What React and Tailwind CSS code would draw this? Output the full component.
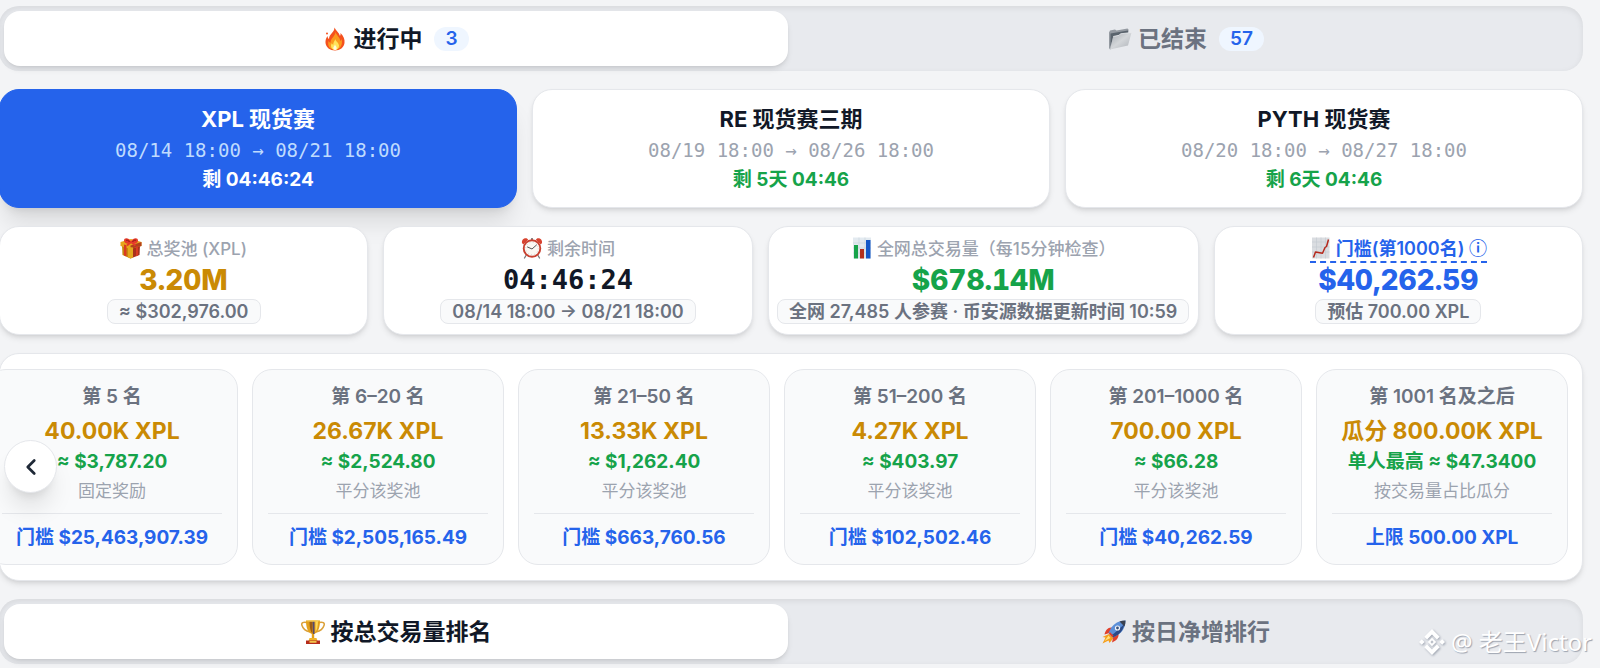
import React from 'react';
import { ChevronLeft } from 'lucide-react';

const contests = [
  { name: 'XPL 现货赛', range: '08/14 18:00 → 08/21 18:00', left: '剩 04:46:24', active: true },
  { name: 'RE 现货赛三期', range: '08/19 18:00 → 08/26 18:00', left: '剩 5天 04:46' },
  { name: 'PYTH 现货赛', range: '08/20 18:00 → 08/27 18:00', left: '剩 6天 04:46' },
];

const tiers = [
  { rank: '第 5 名', prize: '40.00K XPL', usd: '≈ $3,787.20', note: '固定奖励', limit: '门槛 $25,463,907.39' },
  { rank: '第 6–20 名', prize: '26.67K XPL', usd: '≈ $2,524.80', note: '平分该奖池', limit: '门槛 $2,505,165.49' },
  { rank: '第 21–50 名', prize: '13.33K XPL', usd: '≈ $1,262.40', note: '平分该奖池', limit: '门槛 $663,760.56' },
  { rank: '第 51–200 名', prize: '4.27K XPL', usd: '≈ $403.97', note: '平分该奖池', limit: '门槛 $102,502.46' },
  { rank: '第 201–1000 名', prize: '700.00 XPL', usd: '≈ $66.28', note: '平分该奖池', limit: '门槛 $40,262.59' },
  { rank: '第 1001 名及之后', prize: '瓜分 800.00K XPL', usd: '单人最高 ≈ $47.3400', note: '按交易量占比瓜分', limit: '上限 500.00 XPL' },
];

const FireIcon = () => (
  <svg viewBox="0 0 24 24" className="w-6 h-6 shrink-0" aria-hidden="true">
    <path d="M11.5 0.5c1 3 4.500 5 5.500 8.500c.6-.9.7-1.900.5-3c3 3 4.500 6.200 4 10c-.5 4.500-4.500 7.500-9.500 7.500S3 20.500 2.500 16c-.3-3 .8-5.200 2-7c.2 1.500.6 2.500 1.500 3C6 7 11.500 5.500 11.500.5z" fill="#f4511e" />
    <path d="M12.500 5c.5 3 4.500 5 4.800 9c.8-.6 1.100-1.300 1.200-2.200c1.500 5-.5 10.700-6.500 10.700S4.500 18.500 5.500 14c.6 1 1.200 1.500 2 1.800C7.500 11 12 10 12.500 5z" fill="#fb9a1e" />
    <path d="M12.300 12c0 2 3.700 3.500 3.700 6.800c0 2.500-1.700 4.200-4 4.200s-4-1.700-4-4.200c0-1 .3-1.800.8-2.500c.4.8.8 1.200 1.500 1.400c-.3-2.200 1.500-3.500 2-5.700z" fill="#ffe45c" />
    <path d="M12 17.500c.3 1.500 1.700 2 1.700 3.500s-.8 2-1.700 2s-1.700-.8-1.700-2s1.300-1.800 1.700-3.500z" fill="#fffbe0" />
    <circle cx="4" cy="6.500" r="1" fill="#f4511e" />
  </svg>
);

const FolderIcon = () => (
  <svg viewBox="0 0 24 24" className="w-6 h-6 shrink-0" aria-hidden="true">
    <defs>
      <linearGradient id="folderFront" x1="0" y1="0" x2="1" y2="1">
        <stop offset="0" stopColor="#a6abb1" />
        <stop offset="0.5" stopColor="#d3d6d9" />
        <stop offset="1" stopColor="#aeb2b8" />
      </linearGradient>
    </defs>
    <path d="M1 5.500l1-2l5-1l1.500 1L19.500 1.500l1 1V14L2 22.500L1 21z" fill="#949aa1" />
    <path d="M2.500 6.500L20 3.500v4l-15 3l-2.500 9z" fill="#59636c" />
    <path d="M5.200 9.500L11 8.300l1.500-1.500L23.500 5.500L20 18.500L2 22.500z" fill="url(#folderFront)" />
    <path d="M5.200 9.500L11 8.300l1.500-1.500L23.500 5.500" fill="none" stroke="#eceef0" strokeWidth="0.8" />
  </svg>
);

const GiftIcon = () => (
  <svg viewBox="0 0 22 22" className="w-[22px] h-[22px] shrink-0" aria-hidden="true">
    <path d="M2 8.500l8.500 3V21.500L2.500 18z" fill="#c8860d" />
    <path d="M10.500 11.500L20 8.500L19.500 18l-9 3.500z" fill="#a9301c" />
    <path d="M0.500 5L11 2l10.500 3v4l-11 3l-10-3z" fill="#e8a51c" />
    <path d="M10.500 8.500l11-3.500v4l-11 3z" fill="#b3401c" />
    <path d="M8 10l5 .5v10l-2.500 1L8 20.500z" fill="#e3a81d" />
    <path d="M4 7.500l2.500.8v11.300L4 18.500zM16 9.500l2-.6v9.600l-2 .7z" fill="#d93a22" />
    <path d="M11 6C8 7.500 4 6.500 4 3.500C4 0 9 .5 11 4.500C13 .5 18 0 18 3.500c0 3-4 4-7 2.500z" fill="#e5392a" />
    <path d="M6 3.500c1-1 2.800 0 3.500 1.500M16 3.500c-1-1-2.800 0-3.500 1.500" fill="none" stroke="#8e1b14" strokeWidth="1" />
    <path d="M11 5L7 8.500M11 5l4.500 3.500" stroke="#e5392a" strokeWidth="1.800" />
  </svg>
);

const ClockIcon = () => (
  <svg viewBox="0 0 22 22" className="w-[22px] h-[22px] shrink-0" aria-hidden="true">
    <path d="M5 18.500L3.500 21M17 18.500l1.500 2.500" stroke="#777" strokeWidth="1.300" strokeLinecap="round" />
    <path d="M1 6C.5 3 3 .8 6 1.500l1.200 1.300L2.300 7.500zM21 6c.5-3-2-5.200-5-4.500l-1.200 1.300l4.900 4.700z" fill="#d8432f" />
    <path d="M10 1h2v2h-2z" fill="#888" />
    <circle cx="11" cy="11.500" r="8.300" fill="#fbf8f2" stroke="#c8402f" strokeWidth="1.900" />
    <circle cx="11" cy="11.500" r="6.300" fill="none" stroke="#b8bcc0" strokeWidth="0.900" strokeDasharray="0.700 2.600" />
    <path d="M6.500 10l4.500 2L15.500 8" fill="none" stroke="#555" strokeWidth="1" strokeLinecap="round" />
  </svg>
);

const BarsIcon = () => (
  <svg viewBox="0 0 22 22" className="w-[22px] h-[22px] shrink-0" aria-hidden="true">
    <path d="M2 0.500h18v21H2z" fill="#e3eaf0" />
    <path d="M2 6h18M2 11h18M2 16h18M8 .500v21M14 .500v21" stroke="#c8d3dc" strokeWidth="0.600" />
    <path d="M3 8h4v13.500H3z" fill="#16a34a" />
    <path d="M9 12h4v9.500H9z" fill="#b3301d" />
    <path d="M15 3h4.500v18.500H15z" fill="#1458c8" />
  </svg>
);

const TrendIcon = () => (
  <svg viewBox="0 0 22 22" className="w-[22px] h-[22px] shrink-0" aria-hidden="true">
    <path d="M2 0.500h17.500v21H2z" fill="#dadde1" />
    <path d="M2 5h17.500M2 10h17.500M2 15h17.500M6.500 .500v21M11 .500v21M15.500 .500v21" stroke="#c3c9d0" strokeWidth="0.600" />
    <path d="M3.500 20.500L5.500 15l7 1.200L15 10.500l1.500-1L18.500 2.500" fill="none" stroke="#b5281c" strokeWidth="1.500" strokeLinejoin="round" />
  </svg>
);

const TrophyIcon = () => (
  <svg viewBox="0 0 24 24" className="w-6 h-6 shrink-0" aria-hidden="true">
    <path d="M6 2.500C2 1.500 0 3 1 5.500C2 9 5 11 9 12M18 2.500c4-1 6 .5 5 3C22 9 19 11 15 12" fill="none" stroke="#dba13a" strokeWidth="1.500" />
    <path d="M5 .500h14C19 8 17 12.500 13.200 14v5h-2.400v-5C7 12.500 5 8 5 .500z" fill="#e3a01a" />
    <path d="M8.500 1h3v12.500C9.500 12 8.500 7 8.500 1z" fill="#9c5a14" />
    <path d="M11.500 1h2v13h-1.500z" fill="#554a72" />
    <path d="M14.500 1H17c0 5-1 9-2.500 11z" fill="#ffd95a" />
    <ellipse cx="12" cy="1" rx="7" ry="0.800" fill="#f6c94e" />
    <path d="M8.500 18h7l1 3h-9z" fill="#f0b429" />
    <path d="M5 20.500h14V24H5z" fill="#b52c1b" />
    <path d="M8.500 21h7v1.800h-7z" fill="#f2c14b" />
  </svg>
);

const RocketIcon = () => (
  <svg viewBox="0 0 24 24" className="w-6 h-6 shrink-0" aria-hidden="true">
    <path d="M7 14L.500 17l3 .5L.500 23.500l6-3l1 2.500l4-5z" fill="#f59e1b" />
    <path d="M6.500 15.500L2.500 21l6-3z" fill="#ffe27a" />
    <path d="M10 7.500C6 7 3.500 10 2.500 14.500l5-1.500zM16.500 14c.5 4-2.500 7-6.500 8.500l1.200-5.500z" fill="#e0402b" />
    <path d="M23.500.500C17 .500 12 3.500 9 8L6.500 13l4.500 4.500l5-2.700c4.500-3 7.500-7.800 7.500-14.300z" fill="#5b8fd8" />
    <path d="M12 13.500L22.500 4c-1 4.500-3.200 8.300-6.500 10.800L11 17.500l-2-2z" fill="#2c4a86" />
    <path d="M23.500.500c-2.200 0-4.200.3-6 1l5 5c.7-1.800 1-3.800 1-6z" fill="#3a4150" />
    <circle cx="15.500" cy="8" r="2.600" fill="#f3f6fa" />
    <circle cx="15.500" cy="8" r="1.400" fill="#35507e" />
    <path d="M7.500 13l3.500 3.500" stroke="#e0402b" strokeWidth="1.800" />
  </svg>
);

const BrandMark = () => (
  <svg viewBox="0 0 28 28" className="w-[26px] h-[26px] shrink-0 drop-shadow-[1px_1px_1px_#9ca3af]" fill="#fff" aria-hidden="true">
    <path d="M14 0l8.300 8.300-3 3L14 6l-5.300 5.300-3-3zM14 28l8.300-8.300-3-3L14 22l-5.300-5.300-3 3zM3 11l3 3-3 3-3-3zM25 11l3 3-3 3-3-3zM14 9.500l4.500 4.500-4.500 4.500L9.500 14zM14 12.200L12.200 14l1.800 1.800 1.800-1.800z" fillRule="evenodd" />
  </svg>
);

const Tab = ({ active, icon, label, count }) => (
  <button
    className={
      active
        ? 'flex items-center justify-center h-[55px] rounded-2xl bg-white text-[#111827] shadow-md'
        : 'flex items-center justify-center h-[55px] rounded-2xl text-[#6b7280]'
    }
  >
    {icon}
    <span className="ml-[6px] text-[23px] leading-8 font-semibold">{label}</span>
    {count && (
      <span className="ml-3 px-[11px] rounded-full bg-[#eff6ff] text-[#2563eb] text-[19px] leading-6 font-semibold">{count}</span>
    )}
  </button>
);

const TabBar = ({ children }) => (
  <div className="grid grid-cols-2 gap-[6px] p-[5px] rounded-[20px] bg-[#e8eaee] shadow-[inset_0_2px_6px_rgba(0,0,0,0.08)]">
    {children}
  </div>
);

const ContestCard = ({ name, range, left, active }) => (
  <button
    className={
      active
        ? 'flex flex-col items-center pt-[13px] pb-3 rounded-[20px] border border-[#2563eb] bg-[#2563eb] text-white shadow-xl'
        : 'flex flex-col items-center pt-[13px] pb-3 rounded-[20px] border border-[#e5e7eb] bg-white text-[#111827] shadow-md'
    }
  >
    <span className="text-[22px] leading-8 font-bold">{name}</span>
    <span
      className={
        active
          ? 'font-[DejaVu_Sans_Mono,monospace] text-[19px] leading-[30px] text-[#bfdbfe]'
          : 'font-[DejaVu_Sans_Mono,monospace] text-[19px] leading-[30px] text-[#9ca3af]'
      }
    >
      {range}
    </span>
    <span className={active ? 'text-[19px] leading-[30px] font-bold' : 'text-[19px] leading-[30px] font-bold text-[#16a34a]'}>{left}</span>
  </button>
);

const StatCard = ({ label, children, pill }) => (
  <div className="flex flex-col items-center pt-[10px] pb-[10px] rounded-[20px] border border-[#e5e7eb] bg-white shadow-md whitespace-nowrap">
    <div className="flex h-[26px] text-[17px] leading-6 font-medium text-[#9ca3af]">{label}</div>
    <div className="text-[28px] leading-[34px] font-extrabold tabular-nums">{children}</div>
    <div className="mt-[2px] px-[11px] rounded-lg border border-[#e5e7eb] bg-[#f9fafb] text-[18px] leading-[23px] font-semibold text-[#6b7280]">{pill}</div>
  </div>
);

const TierCard = ({ rank, prize, usd, note, limit }) => (
  <div className="shrink-0 w-[252px] px-[15px] pt-[14px] pb-3 rounded-[20px] border border-[#e5e7eb] bg-[#f9fafb] text-center whitespace-nowrap">
    <div className="text-[19px] leading-[26px] font-semibold text-[#6b7280]">{rank}</div>
    <div className="mt-1 flex justify-center text-[23px] leading-[34px] font-bold text-[#ca8a04]">{prize}</div>
    <div className="flex justify-center text-[19px] leading-7 font-bold text-[#16a34a]">{usd}</div>
    <div className="text-[17px] leading-[30px] text-[#9ca3af]">{note}</div>
    <div className="mt-[7px] pt-[10px] border-t border-[#e5e7eb] text-[19px] leading-7 font-bold text-[#2563eb]">{limit}</div>
  </div>
);

const App = () => {
  return (
    <div className="relative min-h-screen overflow-hidden bg-[#f3f4f6] pt-[6px] pr-[17px] font-[Inter,'Noto_Sans_CJK_SC',sans-serif]">
      <main className="-ml-px flex flex-col gap-[18px]">
        <TabBar>
          <Tab active icon={<FireIcon />} label="进行中" count="3" />
          <Tab icon={<FolderIcon />} label="已结束" count="57" />
        </TabBar>

        <section className="grid grid-cols-3 gap-[15px]">
          {contests.map((c) => (
            <ContestCard key={c.name} {...c} />
          ))}
        </section>

        <section className="grid grid-cols-[6fr_6fr_7fr_6fr] gap-[15px]">
          <StatCard label={<><GiftIcon /><span className="ml-1">总奖池 (XPL)</span></>} pill="≈ $302,976.00">
            <span className="text-[#ca8a04]">3.20M</span>
          </StatCard>
          <StatCard label={<><ClockIcon /><span className="ml-1">剩余时间</span></>} pill="08/14 18:00 → 08/21 18:00">
            <span className="block font-[DejaVu_Sans_Mono,monospace] text-[27px] font-bold text-[#111827]">04:46:24</span>
          </StatCard>
          <StatCard label={<><BarsIcon /><span className="ml-1">全网总交易量（每15分钟检查）</span></>} pill="全网 27,485 人参赛 · 币安源数据更新时间 10:59">
            <span className="text-[#16a34a]">$678.14M</span>
          </StatCard>
          <StatCard
            label={
              <button className="flex h-[26px] border-b-2 border-dashed border-[#2563eb] text-[18px] font-semibold text-[#2563eb]">
                <TrendIcon />
                <span className="ml-1">门槛(第1000名) ⓘ</span>
              </button>
            }
            pill="预估 700.00 XPL"
          >
            <span className="text-[#2563eb]">$40,262.59</span>
          </StatCard>
        </section>

        <section className="relative rounded-[20px] border border-[#e5e7eb] bg-white shadow-md">
          <div className="flex justify-end gap-[14px] overflow-hidden rounded-[20px] py-[15px] pr-[14px]">
            {tiers.map((t) => (
              <TierCard key={t.rank} {...t} />
            ))}
          </div>
          <button
            aria-label="上一页"
            className="absolute left-1 top-[86px] flex items-center justify-center w-[53px] h-[53px] rounded-full border border-[#e5e7eb] bg-white text-[#1f2937] shadow-xl"
          >
            <ChevronLeft size={26} strokeWidth={2.5} />
          </button>
        </section>

        <TabBar>
          <Tab active icon={<TrophyIcon />} label="按总交易量排名" />
          <Tab icon={<RocketIcon />} label="按日净增排行" />
        </TabBar>
      </main>

      <div className="absolute right-2 bottom-[10px] flex items-center gap-[6px] text-white">
        <BrandMark />
        <span className="font-['Noto_Sans','Noto_Sans_CJK_SC',sans-serif] text-[24px] leading-8 [text-shadow:1px_1px_1px_#9ca3af]">@ 老王Victor</span>
      </div>
    </div>
  );
};

export default App;
